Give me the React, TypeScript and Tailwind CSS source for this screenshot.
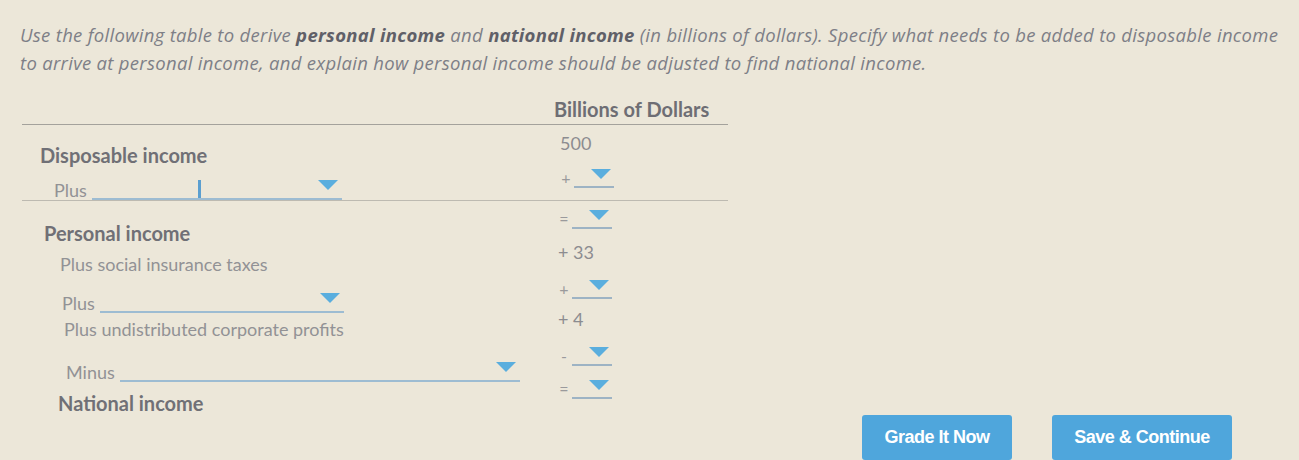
import React from "react";

const labelFont = { fontFamily: "Lato, 'Open Sans', sans-serif" };

function Caret({ className = "" }: { className?: string }) {
  return (
    <svg width="20" height="10" viewBox="0 0 20 10" className={className}>
      <polygon points="0,0 20,0 10,10" fill="#5aaede" />
    </svg>
  );
}

function LabelSelect({ width, cursor = false }: { width: number; cursor?: boolean }) {
  return (
    <span
      className="relative inline-block h-[22px] border-b-2 border-[#9dbcd2] align-bottom"
      style={{ width }}
    >
      {cursor && <span className="absolute bottom-0 left-[106px] h-[18px] w-[3px] bg-[#5b9fd0]" />}
      <Caret className="absolute right-[4px] top-[2px]" />
    </span>
  );
}

function ValueSelect({ sign }: { sign: string }) {
  return (
    <div className="flex h-5 items-center gap-[2px] text-[16px] text-[#9a9a9c]">
      <span className="w-[12px] text-center">{sign}</span>
      <span className="relative inline-block h-[20px] w-[40px] border-b-2 border-[#9db3c4]">
        <Caret className="absolute left-[17px] top-[1px]" />
      </span>
    </div>
  );
}

export default function App() {
  return (
    <div className="h-[460px] w-[1299px] overflow-hidden bg-[#ece7d9]">
      <p
        className="pl-[20px] pr-[10px] pt-[21px] text-[18.5px] italic leading-[28px] tracking-[0.3px] text-[#7e7f87]"
        style={{ fontFamily: "'Open Sans', 'Noto Sans', sans-serif" }}
      >
        Use the following table to derive <b className="text-[#606068]">personal income</b> and{" "}
        <b className="text-[#606068]">national income</b> (in billions of dollars). Specify what needs to be added to
        disposable income to arrive at personal income, and explain how personal income should be adjusted to find
        national income.
      </p>

      <div className="flex items-end">
        <div className="ml-[22px] mt-[15px] w-[706px] pb-[47px]" style={labelFont}>
          <div className="grid h-[33px] grid-cols-[532px_174px] border-b border-[#a4a29c]">
            <div />
            <div className="pt-[2px] text-[20px] font-bold text-[#6e6e74]">Billions of Dollars</div>
          </div>

          <div className="grid h-[76px] grid-cols-[532px_174px] border-b border-[#bdbab1]">
            <div className="pl-[18px]">
              <div className="mt-[20px] h-5 text-[20px] font-bold leading-5 text-[#707076]">Disposable income</div>
              <div className="mt-[13px] flex items-end pl-[14px] text-[18px] leading-5 text-[#929295]">
                <span className="mr-[5px]">Plus</span>
                <LabelSelect width={250} cursor />
              </div>
            </div>
            <div className="pl-[6px]">
              <div className="mt-[8px] h-5 text-[18px] leading-5 text-[#8c8c90]">500</div>
              <div className="mt-[15px]">
                <ValueSelect sign="+" />
              </div>
            </div>
          </div>

          <div className="grid grid-cols-[532px_174px]">
            <div className="pl-[22px]">
              <div className="mt-[22px] h-5 text-[20px] font-bold leading-5 text-[#707076]">Personal income</div>
              <div className="mt-[11px] h-5 pl-[16px] text-[18px] leading-5 text-[#929295]">
                Plus social insurance taxes
              </div>
              <div className="mt-[17px] flex items-end pl-[18px] text-[18px] leading-5 text-[#929295]">
                <span className="mr-[5px]">Plus</span>
                <LabelSelect width={244} />
              </div>
              <div className="mt-[6px] h-5 pl-[20px] text-[18px] leading-5 text-[#929295]">
                Plus undistributed corporate profits
              </div>
              <div className="mt-[21px] flex items-end pl-[22px] text-[18px] leading-5 text-[#929295]">
                <span className="mr-[5px]">Minus</span>
                <LabelSelect width={400} />
              </div>
              <div className="mt-[11px] h-5 pl-[14px] text-[20px] font-bold leading-5 text-[#707076]">
                National income
              </div>
            </div>
            <div className="pl-[4px]">
              <div className="mt-[8px]">
                <ValueSelect sign="=" />
              </div>
              <div className="mt-[13px] h-5 text-[18px] leading-5 text-[#8c8c90]">+ 33</div>
              <div className="mt-[17px]">
                <ValueSelect sign="+" />
              </div>
              <div className="mt-[10px] h-5 text-[18px] leading-5 text-[#8c8c90]">+ 4</div>
              <div className="mt-[17px]">
                <ValueSelect sign="-" />
              </div>
              <div className="mt-[13px]">
                <ValueSelect sign="=" />
              </div>
            </div>
          </div>
        </div>

        <div
          className="ml-auto mr-[67px] flex gap-[40px]"
          style={{ fontFamily: "'Liberation Sans', Arial, sans-serif" }}
        >
          <button className="h-[45px] w-[150px] rounded-[3px] bg-[#4fa6dc] text-[18px] font-bold tracking-[-0.5px] text-white">
            Grade It Now
          </button>
          <button className="h-[45px] w-[180px] rounded-[3px] bg-[#4fa6dc] text-[18px] font-bold tracking-[-0.5px] text-white">
            Save &amp; Continue
          </button>
        </div>
      </div>
    </div>
  );
}
